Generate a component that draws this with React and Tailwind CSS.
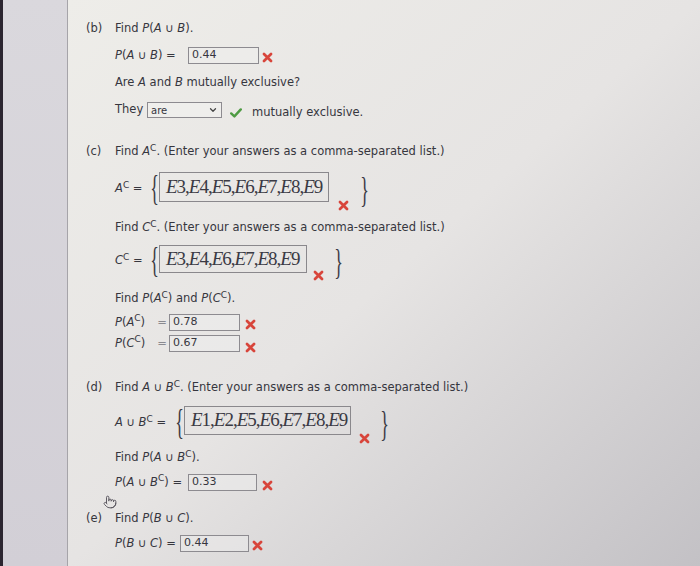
import { ChevronDown, Pointer } from "lucide-react";

const Cross = ({ className = "" }) => (
    <svg width="11" height="11" viewBox="0 0 10 10" className={`shrink-0 ${className}`}>
        <path d="M1.8 1.8 L8.2 8.2 M8.2 1.8 L1.8 8.2" stroke="#d8453b" strokeWidth="2.5" strokeLinecap="round" />
    </svg>
);

const Check = ({ className = "" }) => (
    <svg width="12" height="10" viewBox="0 0 12 10" className={`shrink-0 ${className}`}>
        <path d="M1.2 5.4 L4.4 8.4 L10.8 1.4" stroke="#4e9b43" strokeWidth="2.4" fill="none" strokeLinecap="round" strokeLinejoin="round" />
    </svg>
);

const I = ({ children }) => <span className="italic">{children}</span>;
const C = () => <sup className="text-[9px] not-italic">C</sup>;

const Box = ({ value, className = "" }) => (
    <div className={`flex items-center border border-[#8d8b90] bg-[#f1f0ef]/40 pl-[3px] text-[11px] ${className}`}>
        {value}
    </div>
);

const SetBox = ({ items, className = "" }) => (
    <div className={`flex items-center whitespace-nowrap border border-[#8a888c] pl-[6px] font-['Liberation_Serif',serif] text-[19px] tracking-[-1px] text-[#3a3a44] ${className}`}>
        {items.map((n, i) => (
            <span key={n}>
                {i > 0 && ","}
                <span className="italic">E</span>
                {n}
            </span>
        ))}
    </div>
);

const Brace = ({ ch, className = "" }) => (
    <div className={`flex h-[36px] w-[8px] shrink-0 items-center justify-center font-['Liberation_Serif',serif] text-[36px] leading-[36px] text-[#3a3a44] ${className}`}>
        <span className="inline-block scale-x-[0.5]">{ch}</span>
    </div>
);

const Part = ({ label, className = "", children }) => (
    <div className={`flex ${className}`}>
        <div className="w-[29px] shrink-0 leading-4">{label}</div>
        <div className="flex flex-col">{children}</div>
    </div>
);

export default function App() {
    return (
        <div className="flex h-[566px] w-[700px] overflow-hidden whitespace-nowrap font-['DejaVu_Sans',sans-serif] text-[11.5px] text-[#36363e]">
            <div className="w-[68px] shrink-0 border-l-[3px] border-r border-l-[#2b2530] border-r-[#a6a4a9] bg-linear-to-b from-[#dad8dd] to-[#d2cfd6]" />

            <div className="relative flex-1 bg-linear-to-br from-[#eeede9] via-[#e6e4e3] to-[#c3c1c5] pl-[18px] pt-[20px]">
                <Part label="(b)">
                    <div className="h-4 leading-4">
                        Find <I>P</I>(<I>A</I> ∪ <I>B</I>).
                    </div>
                    <div className="mt-[11px] flex h-[17px] items-center">
                        <div className="w-[73px] shrink-0">
                            <I>P</I>(<I>A</I> ∪ <I>B</I>) =
                        </div>
                        <Box value="0.44" className="h-[17px] w-[71px]" />
                        <Cross className="ml-[3px] mt-[4px]" />
                    </div>
                    <div className="mt-[10px] h-4 leading-4">
                        Are <I>A</I> and <I>B</I> mutually exclusive?
                    </div>
                    <div className="mt-[12px] flex h-4 items-center">
                        <div className="w-[32px] shrink-0">They</div>
                        <div className="flex h-[16px] w-[75px] items-center justify-between border border-[#8d8b90] bg-[#f4f3f2]/50 pl-[3px] pr-[3px] text-[10px]">
                            <span>are</span>
                            <ChevronDown size={10} strokeWidth={3} className="text-[#444]" />
                        </div>
                        <Check className="ml-[8px] mt-[6px]" />
                        <div className="ml-[10px] mt-[5px]">mutually exclusive.</div>
                    </div>
                </Part>

                <Part label="(c)" className="mt-[25px]">
                    <div className="h-4 leading-4">
                        Find <I>A</I>
                        <C />. (Enter your answers as a comma-separated list.)
                    </div>
                    <div className="mt-[13px] flex h-[36px] items-start">
                        <div className="w-[36px] shrink-0 pt-[8px]">
                            <I>A</I>
                            <C /> =
                        </div>
                        <Brace ch="{" className="-mt-[2px]" />
                        <SetBox items={[3, 4, 5, 6, 7, 8, 9]} className="h-[30px] w-[170px]" />
                        <Cross className="ml-[9px] mt-[28px]" />
                        <Brace ch="}" className="ml-[12px]" />
                    </div>
                    <div className="mt-[11px] h-4 leading-4">
                        Find <I>C</I>
                        <C />. (Enter your answers as a comma-separated list.)
                    </div>
                    <div className="mt-[10px] flex h-[33px] items-start">
                        <div className="w-[36px] shrink-0 pt-[7px]">
                            <I>C</I>
                            <C /> =
                        </div>
                        <Brace ch="{" className="-mt-[3px]" />
                        <SetBox items={[3, 4, 6, 7, 8, 9]} className="h-[28px] w-[148px]" />
                        <Cross className="ml-[6px] mt-[25px]" />
                        <Brace ch="}" className="ml-[11px] -mt-[1px]" />
                    </div>
                    <div className="mt-[12px] h-4 leading-4">
                        Find <I>P</I>(<I>A</I>
                        <C />) and <I>P</I>(<I>C</I>
                        <C />).
                    </div>
                    <div className="mt-[8px] flex h-[17px] items-center">
                        <div className="w-[40px] shrink-0">
                            <I>P</I>(<I>A</I>
                            <C />)
                        </div>
                        <div className="w-[14px] shrink-0 text-center text-[#8a8a90]">=</div>
                        <Box value="0.78" className="h-[17px] w-[71px]" />
                        <Cross className="ml-[5px] mt-[3px]" />
                    </div>
                    <div className="mt-[4px] flex h-[17px] items-center">
                        <div className="w-[40px] shrink-0">
                            <I>P</I>(<I>C</I>
                            <C />)
                        </div>
                        <div className="w-[14px] shrink-0 text-center text-[#8a8a90]">=</div>
                        <Box value="0.67" className="h-[17px] w-[71px]" />
                        <Cross className="ml-[5px] mt-[7px]" />
                    </div>
                </Part>

                <Part label="(d)" className="mt-[27px]">
                    <div className="h-4 leading-4">
                        Find <I>A</I> ∪ <I>B</I>
                        <C />. (Enter your answers as a comma-separated list.)
                    </div>
                    <div className="mt-[11px] flex h-[36px] items-start">
                        <div className="w-[61px] shrink-0 pt-[8px]">
                            <I>A</I> ∪ <I>B</I>
                            <C /> =
                        </div>
                        <Brace ch="{" className="-mt-[2px] w-[7px]" />
                        <SetBox items={[1, 2, 5, 6, 7, 8, 9]} className="h-[29px] w-[167px]" />
                        <Cross className="ml-[8px] mt-[27px]" />
                        <Brace ch="}" className="ml-[11px]" />
                    </div>
                    <div className="mt-[7px] h-4 leading-4">
                        Find <I>P</I>(<I>A</I> ∪ <I>B</I>
                        <C />).
                    </div>
                    <div className="mt-[9px] flex h-[17px] items-center">
                        <div className="w-[73px] shrink-0">
                            <I>P</I>(<I>A</I> ∪ <I>B</I>
                            <C />) =
                        </div>
                        <Box value="0.33" className="h-[17px] w-[69px]" />
                        <Cross className="ml-[5px] mt-[5px]" />
                    </div>
                </Part>

                <Part label="(e)" className="mt-[19px]">
                    <div className="h-4 leading-4">
                        Find <I>P</I>(<I>B</I> ∪ <I>C</I>).
                    </div>
                    <div className="mt-[9px] flex h-[17px] items-center">
                        <div className="w-[65px] shrink-0">
                            <I>P</I>(<I>B</I> ∪ <I>C</I>) =
                        </div>
                        <Box value="0.44" className="h-[17px] w-[69px]" />
                        <Cross className="ml-[3px] mt-[4px]" />
                    </div>
                </Part>

                <Pointer size={14} strokeWidth={1.6} className="absolute left-[35px] top-[495px] text-[#55525a]" />
            </div>
        </div>
    );
}
